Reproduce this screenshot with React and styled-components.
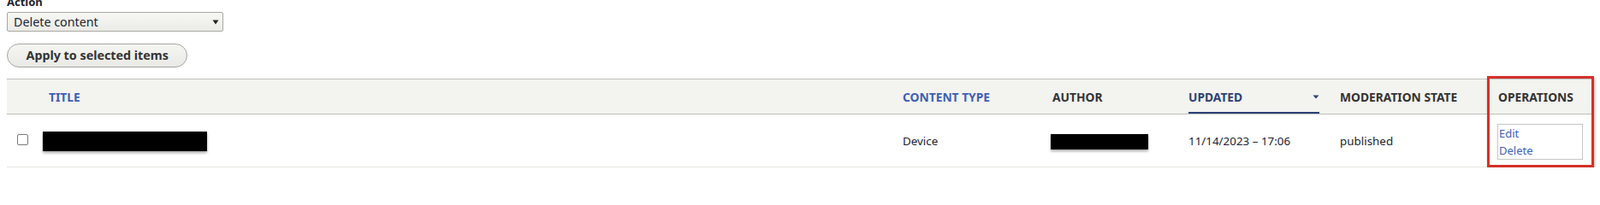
import React from "react";
import styled, { createGlobalStyle } from "styled-components";

const GlobalStyle = createGlobalStyle`
  html, body { margin: 0; padding: 0; background: #fff; }
  body {
    font-family: "Noto Sans", "DejaVu Sans", sans-serif;
    color: #222330;
    overflow: hidden;
  }
`;

const Page = styled.div`
  display: flex;
  flex-direction: column;
  align-items: flex-start;
  padding: 0 8px;
  width: 1854px;
`;

const FormItem = styled.div`
  display: flex;
  flex-direction: column;
  gap: 4px;
  margin-top: -6px;
`;

const Label = styled.label`
  font-size: 13px;
  font-weight: 700;
  line-height: 16px;
  color: #222330;
`;

const SelectWrap = styled.div`
  position: relative;
  width: 253px;
  height: 23px;
`;

const Select = styled.select`
  appearance: none;
  -webkit-appearance: none;
  box-sizing: border-box;
  width: 100%;
  height: 100%;
  margin: 0;
  padding: 0 20px 0 7px;
  border: 1px solid #a8a8a4;
  border-radius: 2px;
  background: linear-gradient(#f7f7f4, #ebebe6);
  font-family: "Noto Sans", "DejaVu Sans", sans-serif;
  font-size: 14.3px;
  line-height: 21px;
  color: #222330;
  outline: none;
`;

const SelectArrow = styled.svg`
  position: absolute;
  left: 240px;
  top: 9px;
  pointer-events: none;
`;

const Button = styled.button`
  box-sizing: border-box;
  margin-top: 14px;
  height: 28px;
  padding: 0 21.5px;
  border: 1px solid #a6a6a2;
  border-radius: 20em;
  background: linear-gradient(#f5f5f2, #e9e9e5);
  font-family: "Noto Sans", "DejaVu Sans", sans-serif;
  font-size: 14.3px;
  font-weight: 700;
  color: #333;
  line-height: 26px;
  cursor: pointer;
`;

const TableWrap = styled.div`
  position: relative;
  margin-top: 13px;
  width: 1854px;
`;

const Table = styled.table`
  width: 1854px;
  border-collapse: collapse;
  table-layout: fixed;
`;

const HeadRow = styled.tr`
  background: #f3f3f0;
  border-top: 1px solid #bfbfba;
  border-bottom: 1px solid #bfbfba;
`;

const Th = styled.th`
  box-sizing: border-box;
  height: 40px;
  padding: 0 12px;
  text-align: left;
  vertical-align: middle;
  font-size: 13.8px;
  font-weight: 700;
  text-transform: uppercase;
  color: #333;
  white-space: nowrap;
`;

const SortLink = styled.a`
  display: flex;
  align-items: center;
  justify-content: space-between;
  box-sizing: border-box;
  height: 40px;
  color: ${(p) => (p.$active ? "#2c4274" : "#3c5fb4")};
  text-decoration: none;
  border-bottom: 2px solid ${(p) => (p.$active ? "#2c4274" : "transparent")};
  padding-top: 2px;
`;

const BodyRow = styled.tr`
  border-bottom: 1px solid #e6e4df;
`;

const Td = styled.td`
  box-sizing: border-box;
  height: 62px;
  padding: 0 ${(p) => p.$pr ?? 12}px 0 ${(p) => p.$pl ?? 12}px;
  vertical-align: middle;
  font-size: 13.4px;
  line-height: 20px;
  color: #222330;
  white-space: nowrap;
`;

const Checkbox = styled.input`
  appearance: none;
  -webkit-appearance: none;
  display: block;
  box-sizing: border-box;
  width: 13px;
  height: 13px;
  margin: 0 0 2px 0;
  border: 1px solid #7a7a7a;
  border-radius: 2px;
  background: #fff;
`;

const Redacted = styled.div`
  width: ${(p) => p.$w}px;
  height: ${(p) => p.$h}px;
  margin-left: ${(p) => p.$ml ?? 0}px;
  margin-top: ${(p) => p.$mt ?? 0}px;
  background: #000;
  box-shadow: 0 2px 3px rgba(0, 0, 0, 0.35);
`;

const OpsBox = styled.div`
  box-sizing: border-box;
  width: 100px;
  height: 42px;
  padding: 0 1px;
  border: 1px solid #c6c6c6;
  display: flex;
  flex-direction: column;
  margin-top: 2px;
`;

const OpLink = styled.a`
  font-size: 13px;
  line-height: 20px;
  color: #3c5fb4;
  text-decoration: none;
`;

const Highlight = styled.div`
  position: absolute;
  top: -3px;
  right: -1px;
  width: 125px;
  height: 107px;
  box-sizing: border-box;
  border: 3px solid #d4312a;
  box-shadow: 1px 2px 3px rgba(0, 0, 0, 0.3);
  pointer-events: none;
`;

const cols = [37, 998, 175, 159, 177, 185, 123];

export default function App() {
  return (
    <>
      <GlobalStyle />
      <Page>
        <FormItem>
          <Label htmlFor="action">Action</Label>
          <SelectWrap>
            <Select id="action" defaultValue="delete">
              <option value="delete">Delete content</option>
            </Select>
            <SelectArrow width="8" height="6" viewBox="0 0 8 6">
              <path d="M0.5 0.5 L7.5 0.5 L4 5.5 Z" fill="#222" />
            </SelectArrow>
          </SelectWrap>
        </FormItem>
        <Button type="button">Apply to selected items</Button>
        <TableWrap>
          <Table>
            <colgroup>
              {cols.map((w, i) => (
                <col key={i} style={{ width: w }} />
              ))}
            </colgroup>
            <thead>
              <HeadRow>
                <Th />
                <Th>
                  <SortLink href="#">Title</SortLink>
                </Th>
                <Th>
                  <SortLink href="#">Content type</SortLink>
                </Th>
                <Th>Author</Th>
                <Th>
                  <SortLink href="#" $active>
                    Updated
                    <svg width="8" height="5" viewBox="0 0 8 5">
                      <path d="M0.5 0.5 L7.5 0.5 L4 4.5 Z" fill="#2c4274" />
                    </svg>
                  </SortLink>
                </Th>
                <Th>Moderation state</Th>
                <Th>Operations</Th>
              </HeadRow>
            </thead>
            <tbody>
              <BodyRow>
                <Td>
                  <Checkbox type="checkbox" aria-label="Select" />
                </Td>
                <Td $pl={5}>
                  <Redacted $w={192} $h={23} $mt={2} />
                </Td>
                <Td>Device</Td>
                <Td $pl={10}>
                  <Redacted $w={114} $h={18} $mt={2} />
                </Td>
                <Td>11/14/2023 – 17:06</Td>
                <Td>published</Td>
                <Td $pl={11} $pr={0}>
                  <OpsBox>
                    <OpLink href="#">Edit</OpLink>
                    <OpLink href="#">Delete</OpLink>
                  </OpsBox>
                </Td>
              </BodyRow>
            </tbody>
          </Table>
          <Highlight />
        </TableWrap>
      </Page>
    </>
  );
}
